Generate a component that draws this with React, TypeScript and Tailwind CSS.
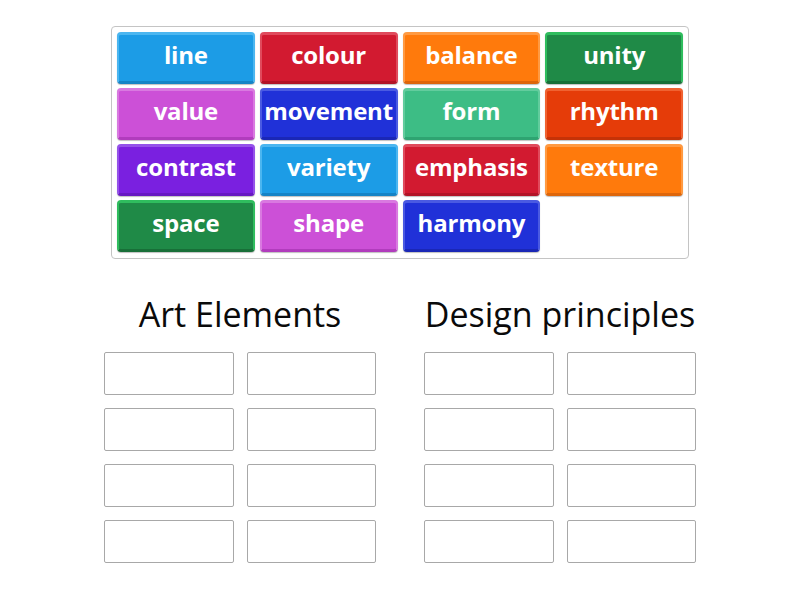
import React from 'react';

const tiles = [
  { label: 'line', c: 'bg-[#1c9ce6] border-[#4bb6f0] border-b-[#1583c6]' },
  { label: 'colour', c: 'bg-[#d21a30] border-[#e04a5c] border-b-[#b31326]' },
  { label: 'balance', c: 'bg-[#ff7a0c] border-[#ff9a42] border-b-[#de660a]' },
  { label: 'unity', c: 'bg-[#1f8a47] border-[#2fbd5e] border-b-[#186f38]' },
  { label: 'value', c: 'bg-[#cc50d7] border-[#d979e0] border-b-[#b13cbd]' },
  { label: 'movement', c: 'bg-[#2031d8] border-[#4a5ae2] border-b-[#1a27b6]' },
  { label: 'form', c: 'bg-[#3dbd85] border-[#62cc9d] border-b-[#2ea471]' },
  { label: 'rhythm', c: 'bg-[#e53c09] border-[#f06231] border-b-[#c53207]' },
  { label: 'contrast', c: 'bg-[#7a20e0] border-[#9552e9] border-b-[#6718c2]' },
  { label: 'variety', c: 'bg-[#1c9ce6] border-[#4bb6f0] border-b-[#1583c6]' },
  { label: 'emphasis', c: 'bg-[#d21a30] border-[#e04a5c] border-b-[#b31326]' },
  { label: 'texture', c: 'bg-[#ff7a0c] border-[#ff9a42] border-b-[#de660a]' },
  { label: 'space', c: 'bg-[#1f8a47] border-[#2fbd5e] border-b-[#186f38]' },
  { label: 'shape', c: 'bg-[#cc50d7] border-[#d979e0] border-b-[#b13cbd]' },
  { label: 'harmony', c: 'bg-[#2031d8] border-[#4a5ae2] border-b-[#1a27b6]' },
];

function DropGroup({ title }: { title: string }) {
  return (
    <div className="w-[272px] flex flex-col items-center">
      <h2 className="text-[34px] leading-none text-[#0a0a0a] mb-[21px] whitespace-nowrap">{title}</h2>
      <div className="grid grid-cols-2 gap-x-[13px] gap-y-[13px] w-full">
        {Array.from({ length: 8 }).map((_, i) => (
          <div key={i} className="h-[43px] border border-[#a8a8a8] rounded-[2px] bg-white" />
        ))}
      </div>
    </div>
  );
}

export default function App() {
  return (
    <div className="w-[800px] h-[600px] bg-white flex flex-col items-center pt-[26px]" style={{ fontFamily: '"Open Sans", sans-serif' }}>
      <div className="w-[578px] border border-[#c4c4c4] rounded-[4px] px-[5px] pt-[5px] pb-[6px]">
        <div className="grid grid-cols-4 gap-x-[5px] gap-y-[4px]">
          {tiles.map((t) => (
            <div
              key={t.label}
              className={`h-[52px] rounded-[4px] border-x-2 border-t-[3px] border-b-[3px] flex items-center justify-center text-white font-bold text-[24px] leading-none tracking-[-0.2px] shadow-[0_1px_1px_rgba(0,0,0,0.25)] ${t.c}`}
            >
              <span className="-mt-[6px]">{t.label}</span>
            </div>
          ))}
        </div>
      </div>
      <div className="flex gap-[48px] mt-[38px]">
        <DropGroup title="Art Elements" />
        <DropGroup title="Design principles" />
      </div>
    </div>
  );
}
